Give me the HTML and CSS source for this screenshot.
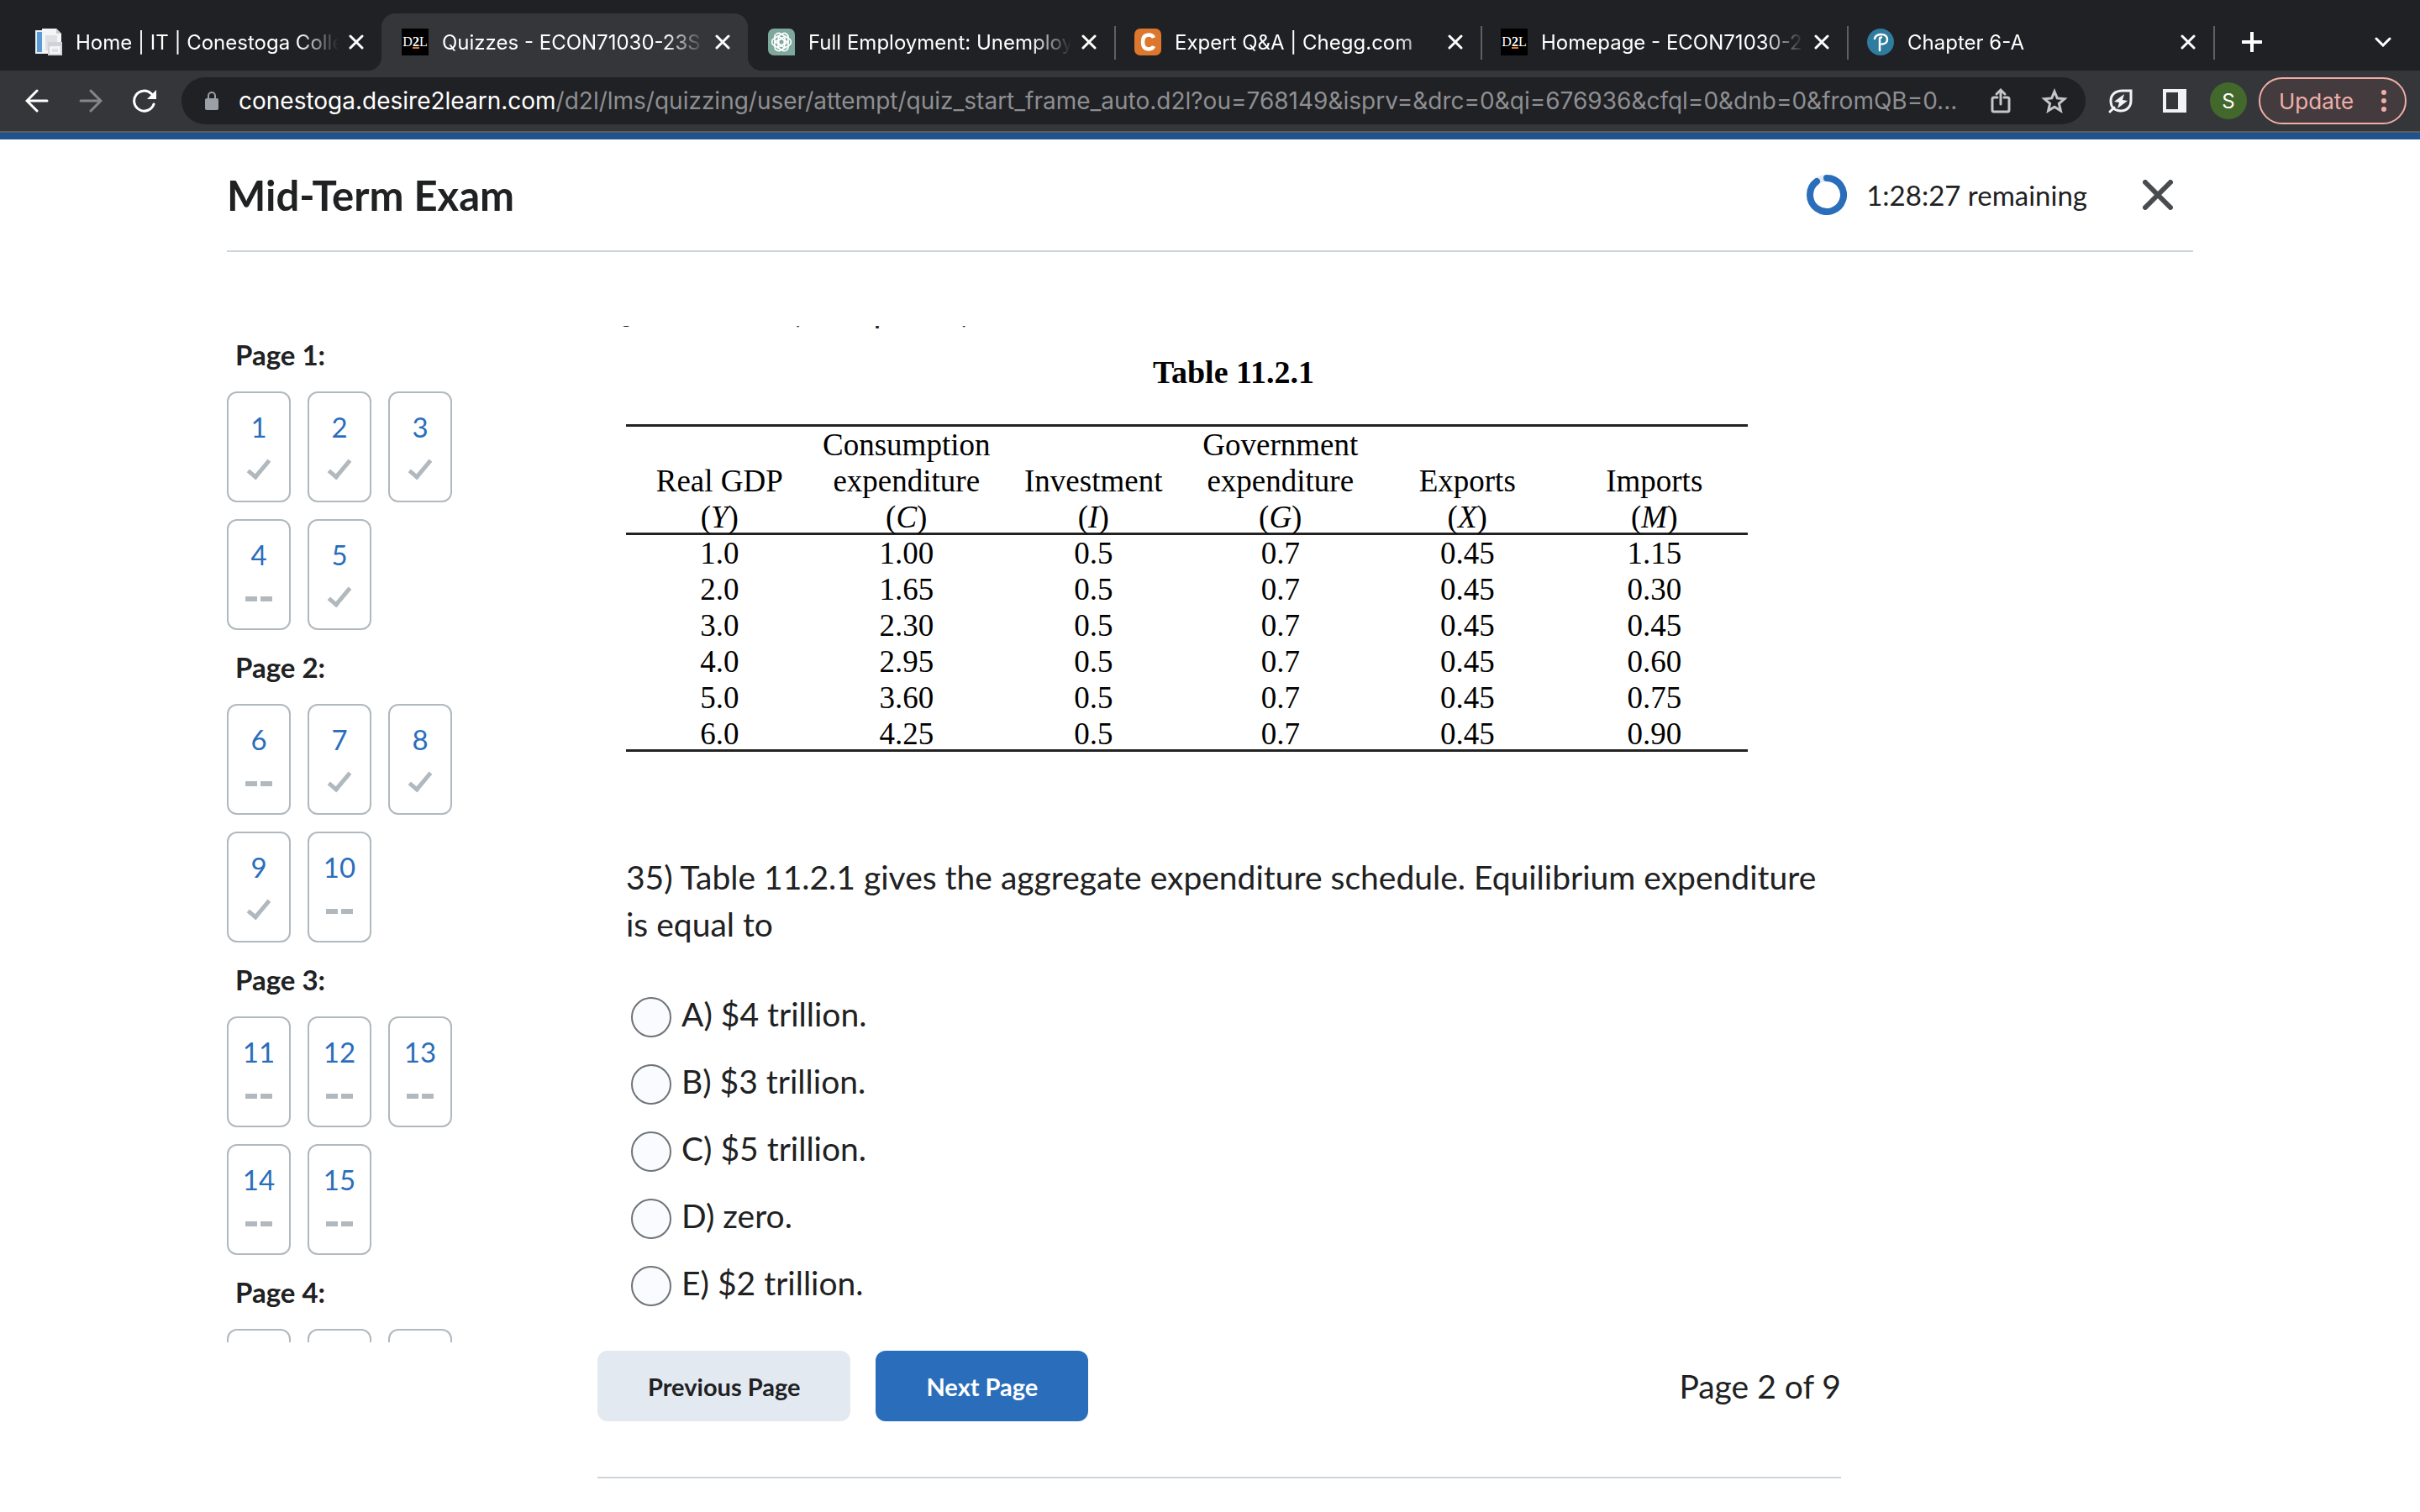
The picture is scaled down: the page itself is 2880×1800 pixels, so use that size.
FILE: index.html
```html
<!DOCTYPE html>
<html lang="en">
<head>
<meta charset="utf-8">
<title>Quizzes - ECON71030-23S</title>
<link rel="stylesheet" href="styles.css">
</head>
<body>
<header class="browser">
  <nav class="tabs" aria-label="Tabs">
    <div class="tab">
      <svg class="favicon" viewBox="0 0 32 32"><rect x="0" y="2" width="22" height="28" fill="#e8eef5"/><rect x="2" y="4" width="7" height="24" fill="#5b9bd5"/><path d="M8 0h17l6 6v23H8z" fill="#f4f5f7"/><path d="M25 0v6h6z" fill="#c5cad1"/><rect x="12" y="8" width="14" height="18" fill="#dde1e6"/><rect x="15" y="16" width="17" height="16" fill="#cfd3d9"/><rect x="17" y="21" width="13" height="9" fill="#f3f4f6"/><rect x="20" y="24" width="7" height="4" fill="#dde1e6"/></svg>
      <span class="tab-title">Home | IT | Conestoga Colle</span>
      <button class="tab-close" aria-label="Close tab"><svg viewBox="0 0 18 18"><path d="M2 2l14 14M16 2L2 16"/></svg></button>
    </div>
    <div class="tab tab-active">
      <span class="favicon d2l">D<b>2</b>L</span>
      <span class="tab-title">Quizzes - ECON71030-23S</span>
      <button class="tab-close" aria-label="Close tab"><svg viewBox="0 0 18 18"><path d="M2 2l14 14M16 2L2 16"/></svg></button>
    </div>
    <div class="tab">
      <svg class="favicon" viewBox="0 0 32 32"><path d="M7 0h18a7 7 0 0 1 7 7v25H7a7 7 0 0 1-7-7V7a7 7 0 0 1 7-7z" fill="#7da99c"/><g fill="none" stroke="#fff" stroke-width="1.7"><g id="petal"><path d="M16 12l-4 2.300v8.700l5 2.800a4.600 4.600 0 0 0 7-4v-5.500L16 12"/></g><use href="#petal" transform="rotate(60 16 16)"/><use href="#petal" transform="rotate(120 16 16)"/><use href="#petal" transform="rotate(180 16 16)"/><use href="#petal" transform="rotate(240 16 16)"/><use href="#petal" transform="rotate(300 16 16)"/></g></svg>
      <span class="tab-title">Full Employment: Unemploy</span>
      <button class="tab-close" aria-label="Close tab"><svg viewBox="0 0 18 18"><path d="M2 2l14 14M16 2L2 16"/></svg></button>
    </div>
    <div class="tab tab-divided">
      <svg class="favicon" viewBox="0 0 32 32"><rect width="32" height="32" rx="7" fill="#dd772d"/><path d="M23 11c-1-2.500-3-3.500-6-3.500-5 0-7 3.500-7 8.500s2 8.500 7 8.500c3 0 5-1 6-3.500" fill="none" stroke="#fff" stroke-width="4.500"/></svg>
      <span class="tab-title">Expert Q&amp;A | Chegg.com</span>
      <button class="tab-close" aria-label="Close tab"><svg viewBox="0 0 18 18"><path d="M2 2l14 14M16 2L2 16"/></svg></button>
    </div>
    <div class="tab tab-divided">
      <span class="favicon d2l">D<b>2</b>L</span>
      <span class="tab-title">Homepage - ECON71030-2</span>
      <button class="tab-close" aria-label="Close tab"><svg viewBox="0 0 18 18"><path d="M2 2l14 14M16 2L2 16"/></svg></button>
    </div>
    <div class="tab tab-divided">
      <svg class="favicon" viewBox="0 0 32 32"><circle cx="16" cy="16" r="16" fill="#2f7c9e"/><path d="M9 12c1-4 4-5 8-5 4.500 0 7 2.500 7 6s-3 5.500-6.500 5.500M15 12v14M15 12c0-1 1-1.500 2-1.500" fill="none" stroke="#fff" stroke-width="2.500" stroke-linecap="round"/></svg>
      <span class="tab-title">Chapter 6-A</span>
      <button class="tab-close" aria-label="Close tab"><svg viewBox="0 0 18 18"><path d="M2 2l14 14M16 2L2 16"/></svg></button>
    </div>
    <button class="new-tab" aria-label="New tab"><svg viewBox="0 0 24 24"><path d="M12 1v22M1 12h22"/></svg></button>
    <button class="tab-menu" aria-label="Search tabs"><svg viewBox="0 0 20 12"><path d="M2 2l8 8 8-8"/></svg></button>
  </nav>
  <div class="toolbar">
    <div class="nav-buttons">
      <button aria-label="Back"><svg viewBox="0 0 28 28"><path d="M26 14H3M14 2L2 14l12 12"/></svg></button>
      <button aria-label="Forward" class="dim"><svg viewBox="0 0 28 28"><path d="M2 14h23M14 2l12 12-12 12"/></svg></button>
      <button aria-label="Reload"><svg viewBox="0 0 28 28"><path d="M25 18A12 12 0 1 1 22 5.500l3 3"/><path d="M28 1v11H17z" class="solid"/></svg></button>
    </div>
    <div class="omnibox">
      <svg class="lock" viewBox="0 0 16 22"><rect y="8" width="16" height="14" rx="2" fill="#9aa0a6"/><path d="M4 9V5a4 4 0 0 1 8 0v4" fill="none" stroke="#9aa0a6" stroke-width="2"/></svg>
      <div class="url"><span class="host">conestoga.desire2learn.com</span>/d2l/lms/quizzing/user/attempt/quiz_start_frame_auto.d2l?ou=768149&amp;isprv=&amp;drc=0&amp;qi=676936&amp;cfql=0&amp;dnb=0&amp;fromQB=0...</div>
      <button aria-label="Share"><svg viewBox="0 0 32 32"><path d="M12 12H8a2 2 0 0 0-2 2v13a2 2 0 0 0 2 2h16a2 2 0 0 0 2-2V14a2 2 0 0 0-2-2h-4M16 20V4M11 8l5-5 5 5"/></svg></button>
      <button aria-label="Bookmark"><svg viewBox="0 0 32 32"><path d="M16 5l3.300 7.900 8.700.8-6.600 5.700 2 8.400-7.400-4.500-7.400 4.500 2-8.400L4 13.700l8.700-.8z"/></svg></button>
    </div>
    <div class="actions">
      <button aria-label="Energy saver"><svg viewBox="0 0 32 32"><path d="M28 4H18C9 4 4 9 4 16c0 8 5 12 12 12s12-5 12-12zM8 24l-5 5"/><path d="M20 8L8 17l6 1-2 7 12-9-6-1z" class="solid"/></svg></button>
      <button aria-label="Side panel"><svg viewBox="0 0 32 32"><path d="M2 2h28v28H2zM6 6v20h14V6z" fill-rule="evenodd" class="solid"/></svg></button>
      <button class="avatar">S</button>
      <button class="update">Update<svg viewBox="0 0 6 28"><circle cx="3" cy="4" r="3"/><circle cx="3" cy="14" r="3"/><circle cx="3" cy="24" r="3"/></svg></button>
    </div>
  </div>
</header>
<div class="page">
  <header class="quiz-header">
    <h1>Mid-Term Exam</h1>
    <svg class="ring" viewBox="0 0 48 48"><circle cx="24" cy="24" r="20" stroke="#e3e9f1"/><path d="M24 4A20 20 0 1 1 12 8" stroke="#2a6ebb"/></svg>
    <span class="timer">1:28:27 remaining</span>
    <button class="quit" aria-label="Close"><svg viewBox="0 0 36 36"><path d="M3 3l30 30M33 3L3 33"/></svg></button>
  </header>
  <div class="columns">
    <nav class="questions" aria-label="Questions">
      <section><h2>Page 1:</h2><div class="cells">
        <a href="#q1">1<i class="done"></i></a><a href="#q2">2<i class="done"></i></a><a href="#q3">3<i class="done"></i></a><a href="#q4">4<i></i></a><a href="#q5">5<i class="done"></i></a></div></section>
      <section><h2>Page 2:</h2><div class="cells">
        <a href="#q6">6<i></i></a><a href="#q7">7<i class="done"></i></a><a href="#q8">8<i class="done"></i></a><a href="#q9">9<i class="done"></i></a><a href="#q10">10<i></i></a></div></section>
      <section><h2>Page 3:</h2><div class="cells">
        <a href="#q11">11<i></i></a><a href="#q12">12<i></i></a><a href="#q13">13<i></i></a><a href="#q14">14<i></i></a><a href="#q15">15<i></i></a></div></section>
      <section><h2>Page 4:</h2><div class="cells">
        <a href="#q16" aria-label="16"></a><a href="#q17" aria-label="17"></a><a href="#q18" aria-label="18"></a></div></section>
    </nav>
    <main class="main">
      <div class="scroller">
        <h2 class="q-title">Question 10 <span>(0.33 points)</span></h2>
        <div class="q-body">
          <p class="caption" id="cap">Table 11.2.1</p>
          <table aria-labelledby="cap">
            <thead><tr><th>Real GDP<br>(<em>Y</em>)</th><th>Consumption<br>expenditure<br>(<em>C</em>)</th><th>Investment<br>(<em>I</em>)</th><th>Government<br>expenditure<br>(<em>G</em>)</th><th>Exports<br>(<em>X</em>)</th><th>Imports<br>(<em>M</em>)</th></tr></thead>
            <tbody>
              <tr><td>1.0</td><td>1.00</td><td>0.5</td><td>0.7</td><td>0.45</td><td>1.15</td></tr>
              <tr><td>2.0</td><td>1.65</td><td>0.5</td><td>0.7</td><td>0.45</td><td>0.30</td></tr>
              <tr><td>3.0</td><td>2.30</td><td>0.5</td><td>0.7</td><td>0.45</td><td>0.45</td></tr>
              <tr><td>4.0</td><td>2.95</td><td>0.5</td><td>0.7</td><td>0.45</td><td>0.60</td></tr>
              <tr><td>5.0</td><td>3.60</td><td>0.5</td><td>0.7</td><td>0.45</td><td>0.75</td></tr>
              <tr><td>6.0</td><td>4.25</td><td>0.5</td><td>0.7</td><td>0.45</td><td>0.90</td></tr>
            </tbody>
          </table>
          <fieldset>
            <legend>35) Table 11.2.1 gives the aggregate expenditure schedule. Equilibrium expenditure is equal to</legend>
            <div class="option"><input type="radio" name="answer" id="a"><label for="a">A) $4 trillion.</label></div>
            <div class="option"><input type="radio" name="answer" id="b"><label for="b">B) $3 trillion.</label></div>
            <div class="option"><input type="radio" name="answer" id="c"><label for="c">C) $5 trillion.</label></div>
            <div class="option"><input type="radio" name="answer" id="d"><label for="d">D) zero.</label></div>
            <div class="option"><input type="radio" name="answer" id="e"><label for="e">E) $2 trillion.</label></div>
          </fieldset>
        </div>
      </div>
      <footer class="pager">
        <button class="btn">Previous Page</button>
        <button class="btn btn-primary">Next Page</button>
        <span class="count">Page 2 of 9</span>
      </footer>
    </main>
  </div>
</div>
</body>
</html>
```
FILE: styles.css
```css
* { box-sizing: border-box; }
body {
  margin: 0;
  height: 100vh;
  display: flex;
  flex-direction: column;
  overflow: hidden;
  background: #fff;
  color: #202122;
  font-family: Lato, "Open Sans", sans-serif;
}
button { border: 0; padding: 0; background: none; color: inherit; font: inherit; }
svg { display: block; }

/* Browser window */
.browser {
  flex: none;
  background: #202124;
  color: #fff;
  font-family: Inter, Roboto, sans-serif;
  border-bottom: 8px solid #20528f;
}
.browser button svg { fill: none; stroke: currentColor; stroke-linecap: round; }
.browser .solid { fill: currentColor; stroke: none; }
.tabs { display: flex; height: 84px; padding: 16px 34px 0 18px; }
.tab {
  position: relative;
  display: flex;
  align-items: center;
  flex: 0 1 436px;
  min-width: 0;
  padding: 0 13px 0 24px;
  font-size: 24px;
}
.tab-active { background: #35363a; border-radius: 16px 16px 0 0; }
.tab-active::before, .tab-active::after {
  content: "";
  position: absolute;
  bottom: 0;
  width: 16px;
  height: 16px;
}
.tab-active::before { right: 100%; background: radial-gradient(circle at 0 0, transparent 16px, #35363a 16px); }
.tab-active::after { left: 100%; background: radial-gradient(circle at 100% 0, transparent 16px, #35363a 16px); }
.tab-divided::before {
  content: "";
  position: absolute;
  left: 0;
  top: 15px;
  width: 2px;
  height: 40px;
  background: #5f6064;
}
.favicon { flex: none; width: 32px; height: 32px; }
.d2l {
  display: flex;
  justify-content: center;
  background: #000;
  font: 16px/32px "Liberation Serif", serif;
}
.d2l b { font-weight: 700; height: 24px; border-bottom: 2px solid #e87722; }
.tab-title {
  flex: 1;
  min-width: 0;
  margin: 0 4px 0 16px;
  overflow: hidden;
  white-space: nowrap;
  -webkit-mask-image: linear-gradient(to left, transparent, #000 48px);
  mask-image: linear-gradient(to left, transparent, #000 48px);
}
.tab-close { padding: 8px; }
.tab-close svg { width: 18px; height: 18px; stroke-width: 3; }
.new-tab { position: relative; padding: 0 34px; }
.new-tab::before { content: ""; position: absolute; left: 0; top: 15px; width: 2px; height: 40px; background: #5f6064; }
.new-tab svg { width: 24px; height: 24px; stroke-width: 4; }
.tab-menu { margin-left: auto; }
.tab-menu svg { width: 20px; height: 12px; stroke-width: 3; }

.toolbar {
  display: flex;
  align-items: center;
  height: 74px;
  padding: 0 16px 0 30px;
  background: #35363a;
  border-bottom: 2px solid #5c5c5e;
}
.nav-buttons { display: flex; gap: 36px; margin-right: 30px; }
.nav-buttons svg { width: 28px; height: 28px; stroke-width: 3; }
.dim { color: #85868a; }
.omnibox {
  flex: 1;
  min-width: 0;
  display: flex;
  align-items: center;
  height: 56px;
  padding: 0 21px 0 28px;
  border-radius: 28px;
  background: #202124;
}
.lock { width: 16px; height: 22px; margin-right: 24px; }
.url { flex: 1; min-width: 0; overflow: hidden; white-space: nowrap; color: #8e8f92; font-size: 28px; line-height: 40px; }
.host { color: #fff; }
.omnibox button { margin-left: 32px; color: #c4c5c8; }
.omnibox button svg { width: 32px; height: 32px; stroke-width: 3; }
.actions { display: flex; align-items: center; gap: 32px; margin-left: 26px; }
.actions svg { width: 32px; height: 32px; stroke-width: 3; color: #f1f3f4; }
.avatar { width: 44px; height: 44px; margin-left: -6px; border-radius: 22px; background: #43682b; font-size: 24px; }
.update {
  display: flex;
  align-items: center;
  justify-content: space-between;
  width: 176px;
  height: 56px;
  margin-left: -18px;
  padding: 0 22px;
  border: 2px solid #efafa8;
  border-radius: 28px;
  background: #443b3e;
  color: #efafa8;
  font-size: 26px;
}
.browser .update svg { width: 6px; height: 28px; fill: #efafa8; stroke: none; }

/* Quiz */
.page { flex: 1; min-height: 0; margin: 0 270px; display: flex; flex-direction: column; }
.quiz-header {
  flex: none;
  display: flex;
  align-items: center;
  height: 134px;
  padding: 0 24px 0 0;
  border-bottom: 2px solid #cdd5dc;
}
h1 { margin: 0 auto 0 0; font-size: 49px; line-height: 60px; }
.ring { width: 48px; height: 48px; fill: none; stroke-width: 8; stroke-linecap: round; }
.timer { margin: 0 66px 0 23px; font-size: 33px; line-height: 40px; }
.quit svg { width: 36px; height: 36px; stroke: #494c4e; stroke-width: 6; stroke-linecap: round; }
.columns { flex: 1; min-height: 0; display: flex; padding-top: 88px; }
.questions { width: 441px; height: 1210px; overflow: hidden; }
.questions section { height: 372px; }
.questions section:first-child { height: 362px; }
.questions h2 { margin: 0; padding: 20px 10px; font-size: 33px; line-height: 48px; }
.questions section:first-child h2 { padding-top: 10px; }
.cells { display: grid; grid-template-columns: repeat(3, 76px); gap: 20px; }
.cells a {
  display: flex;
  flex-direction: column;
  align-items: center;
  height: 132px;
  padding-top: 18px;
  border: 2px solid #b1b9be;
  border-radius: 12px;
  color: #2a6ebb;
  font-size: 33px;
  line-height: 44px;
  text-decoration: none;
}
.cells i { width: 32px; height: 6px; margin-top: 28px; background: linear-gradient(90deg, #b1b9be 14px, #fff 14px, #fff 18px, #b1b9be 18px); }
.cells i.done {
  width: 14px;
  height: 28px;
  margin-top: 12px;
  border: solid #b1b9be;
  border-width: 0 5px 5px 0;
  background: none;
  transform: rotate(40deg);
}
.main { flex: 0 1 1480px; min-width: 0; }
.scroller { height: 1210px; overflow: hidden; }
.q-title { margin: -39px 0 0; padding-left: 6px; height: 51px; font-size: 39px; line-height: 40px; }
.q-title span { font-weight: 400; }
.q-body { padding-left: 34px; }
.caption { margin: 0 0 43px; padding-top: 22px; text-align: center; font: 700 38px/43px "Liberation Serif", serif; color: #000; }
table {
  width: 1335px;
  table-layout: fixed;
  border-spacing: 0;
  box-shadow: 0 -3px 0 #222;
  color: #000;
  font: 37px/43px "Liberation Serif", serif;
}
th, td { padding: 0; text-align: center; font-weight: 400; }
th { vertical-align: bottom; }
th, tbody tr:last-child td { box-shadow: inset 0 -3px 0 #222; }
fieldset { margin: 121px 0 0; padding: 0; border: 0; }
legend { padding: 0; margin-bottom: 43px; font-size: 39px; line-height: 56px; }
.option { display: flex; align-items: center; height: 80px; padding-left: 6px; font-size: 39px; }
.option input {
  appearance: none;
  width: 48px;
  height: 48px;
  margin: 0 12px 0 0;
  border: 2px solid #6e7376;
  border-radius: 24px;
  background: #f9fbff;
}
.option label { line-height: 52px; padding-bottom: 8px; }
.pager { display: flex; align-items: center; gap: 30px; padding: 10px 0 66px; border-bottom: 2px solid #cdd5dc; }
.btn { height: 84px; padding: 0 60px; border-radius: 12px; background: #e3e9f1; font-size: 29px; font-weight: 700; }
.btn-primary { background: #2a6ebb; color: #fff; }
.count { margin-left: auto; font-size: 39px; }
```
